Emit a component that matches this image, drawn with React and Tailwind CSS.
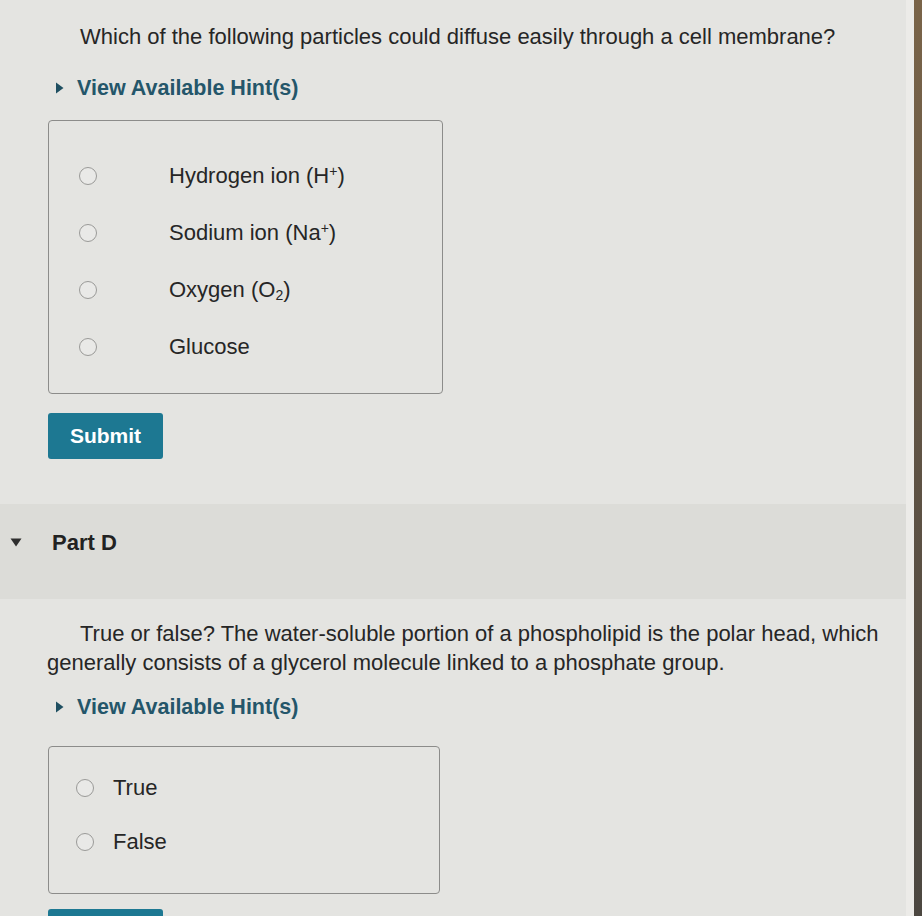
import React, { useState } from "react";

const font = { fontFamily: '"Liberation Sans", Arial, sans-serif' };

const Radio = ({ checked, onClick }) => (
  <button
    type="button"
    onClick={onClick}
    className="flex h-[18px] w-[18px] shrink-0 items-center justify-center rounded-full border-[1.5px] border-[#9a9a98] bg-[#e9e9e7]"
  >
    {checked && <span className="h-[8px] w-[8px] rounded-full bg-[#1d7892]" />}
  </button>
);

const HintToggle = () => (
  <div className="flex h-[28px] items-center pl-[55px] text-[21.5px] font-bold text-[#24566a]">
    <svg width="9" height="12" viewBox="0 0 9 12" className="mr-[13px]">
      <path d="M1 0.5 L8.5 6 L1 11.5 Z" fill="#1f4f61" />
    </svg>
    View Available Hint(s)
  </div>
);

const SubmitButton = () => (
  <button
    type="button"
    className="h-[46px] w-[115px] rounded-[3px] bg-[#1d7892] text-[21px] font-bold text-white"
  >
    Submit
  </button>
);

const partCOptions = [
  { id: "h", label: <>Hydrogen ion (H<sup className="text-[14px]">+</sup>)</> },
  { id: "na", label: <>Sodium ion (Na<sup className="text-[14px]">+</sup>)</> },
  { id: "o2", label: <>Oxygen (O<sub className="text-[14px]">2</sub>)</> },
  { id: "glu", label: <>Glucose</> },
];

export default function App() {
  const [answerC, setAnswerC] = useState(null);
  const [answerD, setAnswerD] = useState(null);

  return (
    <div style={font} className="flex min-h-[916px] w-full bg-[#e4e4e1] text-[#262626]">
      <div className="flex w-[906px] flex-col">
        {/* Part C */}
        <p className="mt-[23px] pl-[80px] text-[22px] leading-[28px]">
          Which of the following particles could diffuse easily through a cell membrane?
        </p>

        <div className="mt-[23px]">
          <HintToggle />
        </div>

        <div className="ml-[48px] mt-[18px] w-[395px] rounded-[4px] border border-[#8c8c8a] pt-[26px] pb-[18px]">
          {partCOptions.map((opt) => (
            <div key={opt.id} className="flex h-[57px] items-center pl-[30px]">
              <Radio checked={answerC === opt.id} onClick={() => setAnswerC(opt.id)} />
              <span className="ml-[72px] text-[22px] leading-[28px]">{opt.label}</span>
            </div>
          ))}
        </div>

        <div className="ml-[48px] mt-[19px]">
          <SubmitButton />
        </div>

        {/* Part D header */}
        <div className="mt-[45px] h-[95px] bg-[#dcdcd8] pt-[24px]">
          <div className="flex h-[28px] items-center">
            <svg width="12" height="9" viewBox="0 0 12 9" className="ml-[10px]">
              <path d="M0.5 0.5 L11.5 0.5 L6 8.5 Z" fill="#2e2e2e" />
            </svg>
            <span className="ml-[30px] text-[22px] font-bold text-[#222]">Part D</span>
          </div>
        </div>

        <p className="mt-[20px] pl-[47px] pr-[6px] text-[22px] leading-[29px] indent-[33px]">
          True or false? The water-soluble portion of a phospholipid is the polar head, which
          generally consists of a glycerol molecule linked to a phosphate group.
        </p>

        <div className="mt-[16px]">
          <HintToggle />
        </div>

        <div className="ml-[48px] mt-[25px] w-[392px] rounded-[4px] border border-[#8c8c8a] pt-[14px] pb-[24px]">
          {["True", "False"].map((opt) => (
            <div key={opt} className="flex h-[54px] items-center pl-[27px]">
              <Radio checked={answerD === opt} onClick={() => setAnswerD(opt)} />
              <span className="ml-[19px] text-[22px] leading-[28px]">{opt}</span>
            </div>
          ))}
        </div>

        <div className="ml-[48px] mt-[15px]">
          <SubmitButton />
        </div>
      </div>
      <div className="w-[8px] bg-[#ecebe8]" />
      <div className="flex-1 bg-gradient-to-b from-[#7a6448] via-[#5e5244] to-[#4a4640]" />
    </div>
  );
}
